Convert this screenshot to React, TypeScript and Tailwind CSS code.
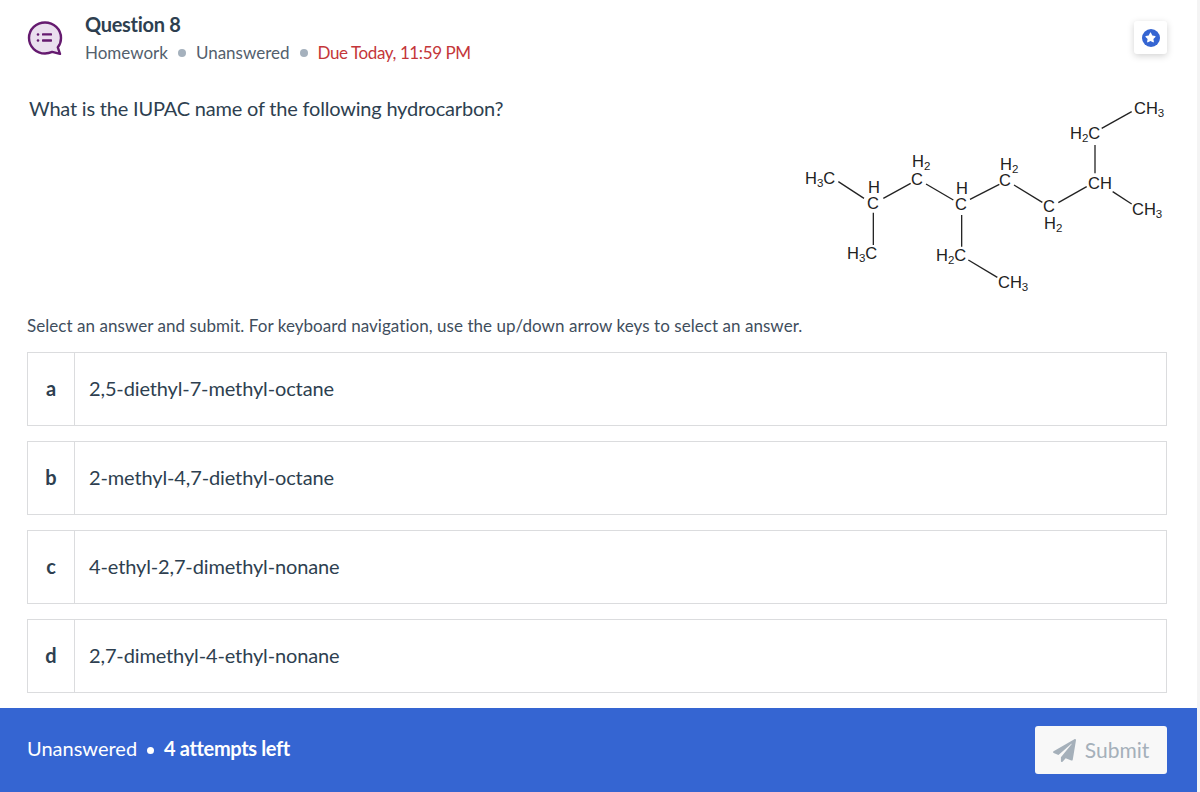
import { FaPaperPlane, FaStar } from "react-icons/fa";

const bonds = [
  [145, 275, 222, 325], [280, 325, 362, 280], [408, 282, 490, 330], [540, 328, 628, 283],
  [672, 285, 757, 337], [805, 338, 890, 290], [968, 305, 1025, 342], [915, 250, 915, 165],
  [935, 115, 1025, 65], [250, 368, 250, 465], [515, 375, 515, 470], [535, 510, 622, 562],
];

const labels: [number, number, string, string, string][] = [
  [15, 94, "H", "3", "C"], [78, 103, "H", "", ""], [77, 119, "C", "", ""], [57, 169, "H", "3", "C"],
  [122, 77, "H", "2", ""], [121, 95, "C", "", ""], [166, 104, "H", "", ""], [165, 120, "C", "", ""],
  [146, 171, "H", "2", "C"], [208, 198, "CH", "3", ""], [210, 80, "H", "2", ""], [209, 96, "C", "", ""],
  [253, 122, "C", "", ""], [254, 139, "H", "2", ""], [298, 99, "CH", "", ""], [342, 125, "CH", "3", ""],
  [280, 49, "H", "2", "C"], [344, 24, "CH", "3", ""],
];

function Molecule() {
  return (
    <svg width="400" height="210" viewBox="0 0 400 210" className="shrink-0">
      {bonds.map((b, i) => (
        <line key={i} x1={b[0] / 3} y1={b[1] / 3} x2={b[2] / 3} y2={b[3] / 3} stroke="#222" strokeWidth="1.3" />
      ))}
      {labels.map(([x, y, a, sub, c], i) => (
        <text key={i} x={x} y={y} fontSize="16.5" fill="#222" fontFamily="Liberation Sans, sans-serif">
          {a}
          {sub && <tspan fontSize="11.5" dy="3">{sub}</tspan>}
          {c && <tspan dy="-3">{c}</tspan>}
        </text>
      ))}
    </svg>
  );
}

function BubbleIcon() {
  return (
    <svg width="36" height="36" viewBox="0 0 36 36" className="shrink-0">
      <path d="M18 2.500C9.300 2.500 2 9.300 2 18s7.300 15.500 16 15.500c2.600 0 5-.6 7.200-1.600l7.800 2-2.200-6.600c2.200-2.600 3.200-6 3.200-9.300C34 9.300 26.700 2.500 18 2.500Z" fill="#eadfee" stroke="#651a6f" strokeWidth="2.400" strokeLinejoin="round" />
      <circle cx="11" cy="14.500" r="1.300" fill="#651a6f" />
      <circle cx="11" cy="20.500" r="1.300" fill="#651a6f" />
      <rect x="15" y="13.200" width="10" height="2.400" rx="0.600" fill="#651a6f" />
      <rect x="15" y="19.300" width="10" height="2.400" rx="0.600" fill="#651a6f" />
    </svg>
  );
}

const options = [
  ["a", "2,5-diethyl-7-methyl-octane"],
  ["b", "2-methyl-4,7-diethyl-octane"],
  ["c", "4-ethyl-2,7-dimethyl-nonane"],
  ["d", "2,7-dimethyl-4-ethyl-nonane"],
];

function Dot() {
  return <span className="mx-[10px] inline-block h-[8px] w-[8px] rounded-full bg-[#a5b1bd]" />;
}

export default function App() {
  return (
    <div className="flex h-[792px] w-[1200px] flex-col overflow-hidden border-r-[3px] border-[#f4f4f4] bg-white font-['Lato',sans-serif] text-[#2e3f50]">
      <header className="flex h-[90px] items-start pl-[27px] pr-[30px]">
        <div className="mt-[20px]"><BubbleIcon /></div>
        <div className="ml-[22px] mt-[11px] flex-1">
          <div className="text-[20px] leading-[26px] font-bold tracking-[-0.3px]">Question 8</div>
          <div className="mt-[3px] flex items-center text-[17px] leading-[26px] text-[#53606d]">
            <span>Homework</span>
            <Dot />
            <span>Unanswered</span>
            <Dot />
            <span className="tracking-[-0.4px] text-[#c4363a]">Due Today, 11:59 PM</span>
          </div>
        </div>
        <button className="mt-[21px] flex h-[33px] w-[33px] items-center justify-center rounded-[3px] bg-white shadow-[0_2px_7px_rgba(0,0,0,0.18)]">
          <span className="flex h-[18px] w-[18px] items-center justify-center rounded-full bg-[#3565d2]">
            <FaStar className="text-[11px] text-white" />
          </span>
        </button>
      </header>

      <section className="flex h-[210px] items-start justify-between pl-[29px] pr-[7px]">
        <p className="mt-[3px] text-[20px] leading-[30px] tracking-[-0.2px]">What is the IUPAC name of the following hydrocarbon?</p>
        <Molecule />
      </section>

      <p className="ml-[27px] mt-[13px] text-[17px] leading-[26px] tracking-[0.05px] text-[#3f4e5d]">
        Select an answer and submit. For keyboard navigation, use the up/down arrow keys to select an answer.
      </p>

      <div className="ml-[27px] mr-[30px] mt-[13px] flex flex-col gap-[15px]">
        {options.map(([k, t]) => (
          <div key={k} className="flex h-[74px] items-stretch border border-[#dbdcde] bg-white">
            <div className="flex w-[47px] items-center justify-center border-r border-[#dbdcde] pb-[2px] text-[20px] font-bold">{k}</div>
            <div className="flex items-center pb-[3px] pl-[14px] text-[20px] tracking-[-0.13px]">{t}</div>
          </div>
        ))}
      </div>

      <footer className="mt-[15px] flex h-[84px] items-center justify-between bg-[#3565d2] pl-[27px] pr-[30px] text-white">
        <div className="flex items-center pb-[4px] text-[20px]">
          <span>Unanswered</span>
          <span className="mx-[10px] mt-[4px] inline-block h-[7px] w-[7px] rounded-full bg-white" />
          <span className="font-bold tracking-[-0.35px]">4 attempts left</span>
        </div>
        <button className="flex h-[48px] w-[132px] items-center justify-center gap-[9px] rounded-[3px] bg-[#f8f8f8] text-[21px] text-[#a5b0ba]">
          <FaPaperPlane className="text-[23px]" />
          <span>Submit</span>
        </button>
      </footer>
    </div>
  );
}
